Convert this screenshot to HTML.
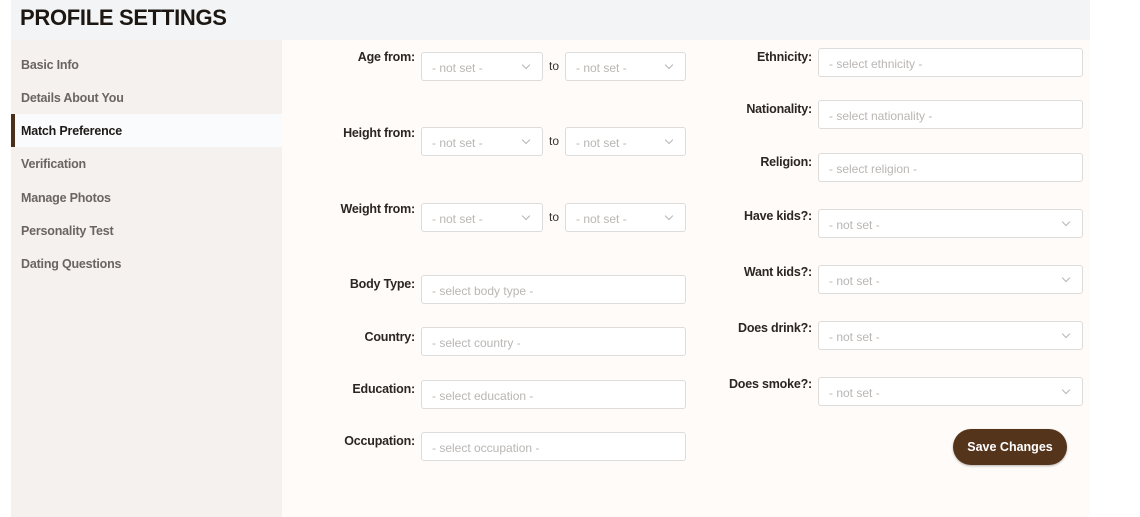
<!DOCTYPE html>
<html><head><style>
*{box-sizing:border-box;margin:0;padding:0}
body{width:1140px;height:517px;background:#fff;font-family:"Liberation Sans",sans-serif;position:relative;overflow:hidden}
.hdr{position:absolute;left:11px;top:0;width:1079px;height:40px;background:#f3f4f6}
.hdr h1{position:absolute;left:9px;top:5px;font-size:22px;font-weight:bold;color:#1c1712;letter-spacing:-0.3px}
.side{position:absolute;left:11px;top:40px;width:271px;height:477px;background:#f5f1ee}
.side div{position:absolute;left:0;width:271px;height:33px;font-size:12.5px;font-weight:bold;color:#6b6461;padding:10px 0 0 10px;letter-spacing:-0.2px}
.side .act{background:#fafbfc;color:#1e1a17;border-left:4px solid #4a2f1b;padding-left:6px}
.main{position:absolute;left:282px;top:40px;width:808px;height:477px;background:#fffbf8}
.l{position:absolute;font-size:12.5px;font-weight:bold;color:#2b2622;text-align:right;letter-spacing:-0.2px}
.i{position:absolute;height:29px;background:#fff;border:1px solid #dedcda;border-radius:3px;font-size:12px;color:#b9b6b3;padding:8px 0 0 10px}
.s::after{content:"";position:absolute;right:13px;top:9px;width:5px;height:5px;border-right:1px solid #b8b6b4;border-bottom:1px solid #b8b6b4;transform:rotate(45deg)}
.to{position:absolute;font-size:12px;color:#333}
.btn{position:absolute;left:953px;top:429px;width:114px;height:36px;background:#55341c;border-radius:18px;color:#fff;font-weight:bold;font-size:12.5px;text-align:center;line-height:36px;box-shadow:0 1px 2px rgba(0,0,0,.3)}
</style></head><body>
<div class="hdr"><h1>PROFILE SETTINGS</h1></div>
<div class="side">
<div style="top:8px">Basic Info</div>
<div style="top:41px">Details About You</div>
<div class="act" style="top:74px">Match Preference</div>
<div style="top:107px">Verification</div>
<div style="top:141px">Manage Photos</div>
<div style="top:174px">Personality Test</div>
<div style="top:207px">Dating Questions</div>
</div>
<div class="main"></div>

<div class="l" style="right:725px;top:50px">Age from:</div>
<div class="i s" style="left:421px;top:52px;width:122px">- not set -</div>
<div class="to" style="left:549px;top:59px">to</div>
<div class="i s" style="left:565px;top:52px;width:121px">- not set -</div>

<div class="l" style="right:725px;top:126px">Height from:</div>
<div class="i s" style="left:421px;top:127px;width:122px">- not set -</div>
<div class="to" style="left:549px;top:134px">to</div>
<div class="i s" style="left:565px;top:127px;width:121px">- not set -</div>

<div class="l" style="right:725px;top:202px">Weight from:</div>
<div class="i s" style="left:421px;top:203px;width:122px">- not set -</div>
<div class="to" style="left:549px;top:210px">to</div>
<div class="i s" style="left:565px;top:203px;width:121px">- not set -</div>

<div class="l" style="right:725px;top:277px">Body Type:</div>
<div class="i" style="left:421px;top:275px;width:265px">- select body type -</div>
<div class="l" style="right:725px;top:330px">Country:</div>
<div class="i" style="left:421px;top:327px;width:265px">- select country -</div>
<div class="l" style="right:725px;top:382px">Education:</div>
<div class="i" style="left:421px;top:380px;width:265px">- select education -</div>
<div class="l" style="right:725px;top:434px">Occupation:</div>
<div class="i" style="left:421px;top:432px;width:265px">- select occupation -</div>

<div class="l" style="right:328px;top:50px">Ethnicity:</div>
<div class="i" style="left:818px;top:48px;width:265px">- select ethnicity -</div>
<div class="l" style="right:328px;top:102px">Nationality:</div>
<div class="i" style="left:818px;top:100px;width:265px">- select nationality -</div>
<div class="l" style="right:328px;top:155px">Religion:</div>
<div class="i" style="left:818px;top:153px;width:265px">- select religion -</div>
<div class="l" style="right:328px;top:209px">Have kids?:</div>
<div class="i s" style="left:818px;top:209px;width:265px">- not set -</div>
<div class="l" style="right:328px;top:265px">Want kids?:</div>
<div class="i s" style="left:818px;top:265px;width:265px">- not set -</div>
<div class="l" style="right:328px;top:321px">Does drink?:</div>
<div class="i s" style="left:818px;top:321px;width:265px">- not set -</div>
<div class="l" style="right:328px;top:377px">Does smoke?:</div>
<div class="i s" style="left:818px;top:377px;width:265px">- not set -</div>

<div class="btn">Save Changes</div>
</body></html>
